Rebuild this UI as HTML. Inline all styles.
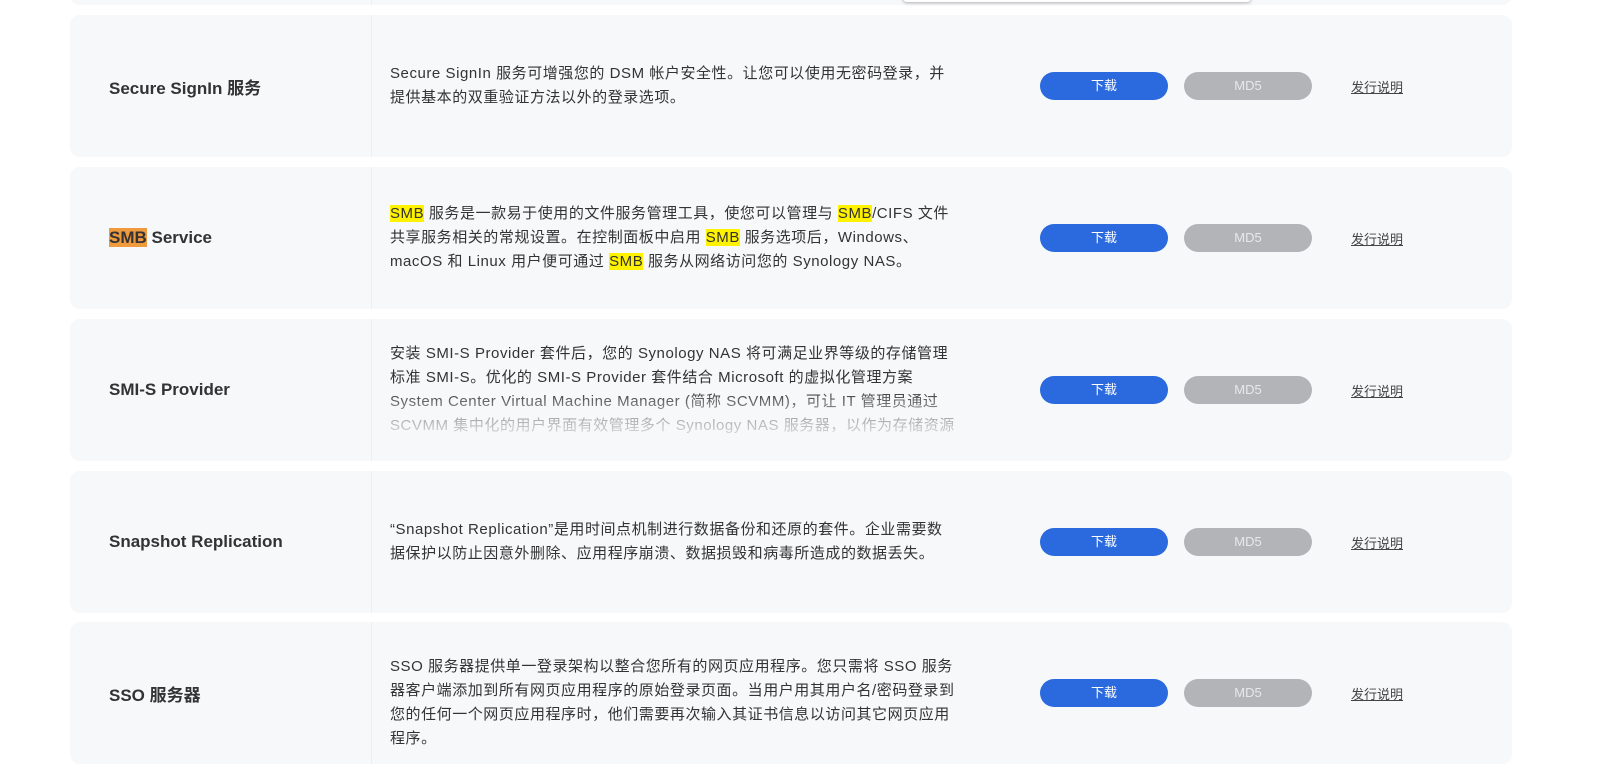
<!DOCTYPE html>
<html><head><meta charset="utf-8"><style>
html,body{margin:0;padding:0;background:#fff;width:1600px;height:749px;overflow:hidden;font-family:"Liberation Sans","Noto Sans CJK SC",sans-serif;color:#333}
.card{position:absolute;left:70px;width:1442px;height:142px;background:#f7f8fa;border-radius:10px}
.div{position:absolute;left:301px;top:0;bottom:0;width:1px;background:#eceef1}
.title{position:absolute;left:39px;top:0;bottom:0;display:flex;align-items:center;font-size:17px;font-weight:bold;color:#333}
.desc{position:absolute;left:320px;width:566px;top:0;bottom:0;display:flex;align-items:center;font-size:15px;line-height:24px;color:#333;letter-spacing:0.55px}
.desc .in{max-height:96px;overflow:hidden}
.fade{-webkit-mask-image:linear-gradient(#000 50%,rgba(0,0,0,.45) 75%,rgba(0,0,0,.12));mask-image:linear-gradient(#000 50%,rgba(0,0,0,.45) 75%,rgba(0,0,0,.12))}
.btn{position:absolute;top:57px;width:128px;height:28px;border-radius:14px;color:#fff;font-size:13px;line-height:28px;text-align:center}
.dl{left:970px;background:#2a6ade}
.md{left:1114px;background:#b3b4b8;color:#e8e8ea}
.lk{position:absolute;left:1281px;top:62px;font-size:13px;color:#444;text-decoration:underline}
.hy{background:#fff200}
.ho{background:#f09a3e}
</style></head><body>
<div class="card" style="top:-137px"><div class="div"></div></div>
<div style="position:absolute;left:903px;top:-10px;width:348px;height:12px;background:#fff;border-radius:4px;box-shadow:0 1px 3px rgba(0,0,0,.3)"></div>

<div class="card" style="top:15px"><div class="div"></div>
<div class="title">Secure SignIn 服务</div>
<div class="desc"><div class="in">Secure SignIn 服务可增强您的 DSM 帐户安全性。让您可以使用无密码登录，并提供基本的双重验证方法以外的登录选项。</div></div>
<div class="btn dl">下载</div><div class="btn md">MD5</div><div class="lk">发行说明</div></div>

<div class="card" style="top:167px"><div class="div"></div>
<div class="title"><span><span class="ho">SMB</span> Service</span></div>
<div class="desc"><div class="in"><span class="hy">SMB</span> 服务是一款易于使用的文件服务管理工具，使您可以管理与 <span class="hy">SMB</span>/CIFS 文件共享服务相关的常规设置。在控制面板中启用 <span class="hy">SMB</span> 服务选项后，Windows、macOS 和 Linux 用户便可通过 <span class="hy">SMB</span> 服务从网络访问您的 Synology NAS。</div></div>
<div class="btn dl">下载</div><div class="btn md">MD5</div><div class="lk">发行说明</div></div>

<div class="card" style="top:319px"><div class="div"></div>
<div class="title">SMI-S Provider</div>
<div class="desc"><div class="in fade">安装 SMI-S Provider 套件后，您的 Synology NAS 将可满足业界等级的存储管理标准 SMI-S。优化的 SMI-S Provider 套件结合 Microsoft 的虚拟化管理方案 System Center Virtual Machine Manager (简称 SCVMM)，可让 IT 管理员通过 SCVMM 集中化的用户界面有效管理多个 Synology NAS 服务器，以作为存储资源使用。</div></div>
<div class="btn dl">下载</div><div class="btn md">MD5</div><div class="lk">发行说明</div></div>

<div class="card" style="top:471px"><div class="div"></div>
<div class="title">Snapshot Replication</div>
<div class="desc"><div class="in">“Snapshot Replication”是用时间点机制进行数据备份和还原的套件。企业需要数据保护以防止因意外删除、应用程序崩溃、数据损毁和病毒所造成的数据丢失。</div></div>
<div class="btn dl">下载</div><div class="btn md">MD5</div><div class="lk">发行说明</div></div>

<div class="card" style="top:622px;height:142px"><div class="div"></div>
<div class="title">SSO 服务器</div>
<div class="desc" style="top:10px;bottom:-10px"><div class="in">SSO 服务器提供单一登录架构以整合您所有的网页应用程序。您只需将 SSO 服务器客户端添加到所有网页应用程序的原始登录页面。当用户用其用户名/密码登录到您的任何一个网页应用程序时，他们需要再次输入其证书信息以访问其它网页应用程序。</div></div>
<div class="btn dl">下载</div><div class="btn md">MD5</div><div class="lk">发行说明</div></div>
</body></html>
